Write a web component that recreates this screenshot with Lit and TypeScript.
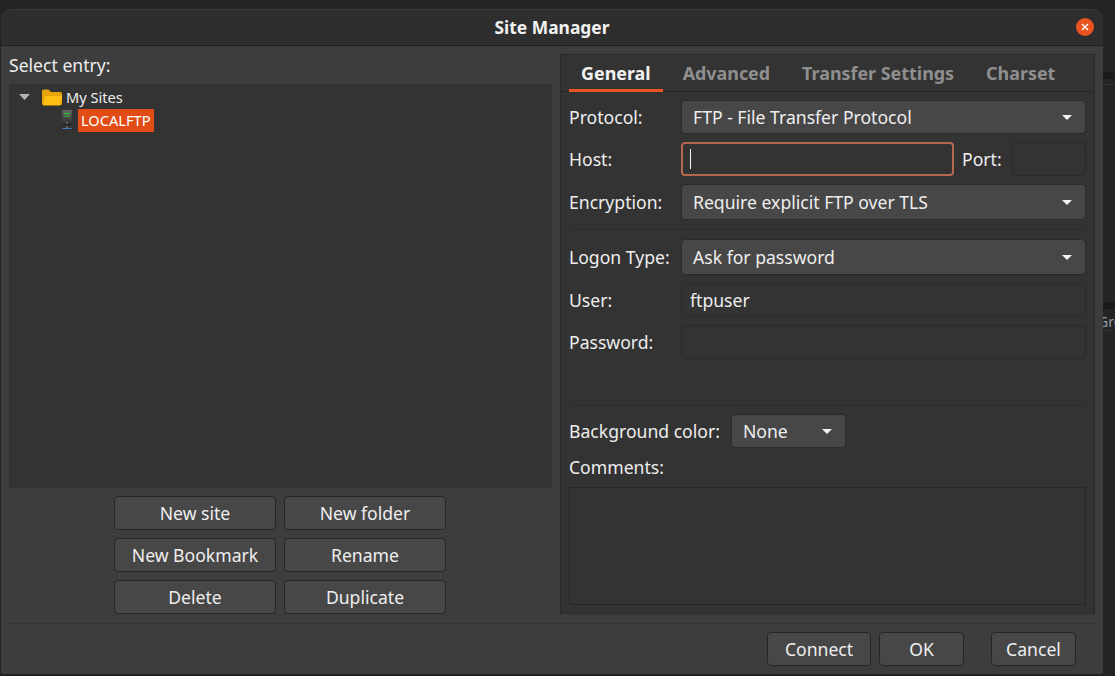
/**
 * FileZilla style Site Manager dialog
 */

import { LitElement, css, html } from "lit";
import { customElement } from "lit/decorators.js";

const caret = html`<svg class="caret" width="10" height="5" viewBox="0 0 10 5"><path d="M0 0h10L5 5z" fill="#f2f2f2" /></svg>`;

@customElement("app-root")
export class AppRoot extends LitElement {
  static styles = css`
    :host {
      display: flex;
      width: 1115px;
      height: 676px;
      overflow: hidden;
      background: #232323;
      font-family: "Noto Sans", "Open Sans", sans-serif;
      font-size: 17.6px;
      line-height: 24px;
      color: #eeeeee;
      box-sizing: border-box;
      padding: 9px 0 2px 1px;
    }

    * {
      box-sizing: border-box;
    }

    .window {
      width: 1102px;
      display: flex;
      flex-direction: column;
      background: #3d3d3d;
      border-radius: 9px 9px 0 0;
      overflow: hidden;
    }

    .titlebar {
      height: 37px;
      flex: none;
      display: flex;
      align-items: center;
      justify-content: center;
      position: relative;
      padding-bottom: 2px;
      background: #2e2e2e;
      border-top: 1px solid #3a3a3a;
      border-bottom: 1px solid #222222;
      font-weight: 700;
      font-size: 17.4px;
      color: #f2f2f2;
    }

    .close {
      position: absolute;
      right: 9px;
      top: 8px;
      width: 18px;
      height: 18px;
      border-radius: 50%;
      background: #e95420;
      display: flex;
      align-items: center;
      justify-content: center;
    }

    .content {
      flex: 1;
      display: flex;
      padding: 8px 8px 0 8px;
      gap: 8px;
    }

    .left {
      width: 543px;
      display: flex;
      flex-direction: column;
    }

    .select-label {
      height: 30px;
      line-height: 23px;
    }

    .tree {
      height: 404px;
      background: #333333;
      font-size: 14.6px;
      padding-top: 2px;
    }

    .tree-row {
      display: flex;
      align-items: center;
      height: 22px;
      white-space: nowrap;
    }

    .tree-root {
      padding-left: 10px;
    }

    .tree-root svg.fold {
      margin-right: 12px;
    }

    .tree-root .name {
      margin-left: 4px;
    }

    .tree-child {
      padding-left: 53px;
      height: 24px;
    }

    .selected {
      margin-left: 6px;
      background: #e24c16;
      color: #ffffff;
      padding: 0 4px 0 3px;
      height: 23px;
      line-height: 23px;
    }

    .site-buttons {
      display: grid;
      grid-template-columns: 162px 162px;
      grid-auto-rows: 34px;
      gap: 8px;
      padding: 8px 0 0 105px;
    }

    .btn {
      display: flex;
      align-items: center;
      justify-content: center;
      background: #474747;
      border: 1px solid #262626;
      border-radius: 4px;
      color: #eeeeee;
    }

    .notebook {
      width: 535px;
      height: 560px;
      border: 1px solid #2a2a2a;
      background: #333333;
      display: flex;
      flex-direction: column;
    }

    .tabs {
      height: 37px;
      flex: none;
      display: flex;
      gap: 8px;
      padding-left: 8px;
      border-bottom: 1px solid #262626;
      font-weight: 700;
      font-size: 17.9px;
      color: #8f8f8f;
    }

    .tab {
      padding: 0 12px;
      height: 37px;
      line-height: 36px;
      white-space: nowrap;
    }

    .tab.active {
      color: #f2f2f2;
      border-bottom: 3px solid #e95420;
      line-height: 36px;
    }

    .form {
      flex: 1;
      display: flex;
      flex-direction: column;
      padding: 8px 8px 8px 8px;
    }

    .row {
      display: grid;
      grid-template-columns: 112px 1fr;
      align-items: center;
      margin-bottom: 8px;
    }

    .row.last-group {
      margin-bottom: 9px;
    }

    .combo {
      height: 34px;
      display: flex;
      align-items: center;
      justify-content: space-between;
      padding: 0 13px 0 11px;
      background: #474747;
      border: 1px solid #2a2a2a;
      border-radius: 4px;
    }

    .entry {
      height: 34px;
      display: flex;
      align-items: center;
      padding: 0 8px;
      background: #333333;
      border: 1px solid #2a2a2a;
      border-radius: 4px;
    }

    .host-line {
      display: flex;
      align-items: center;
    }

    .entry.focus {
      width: 273px;
      flex: none;
      border: 2px solid #b5674f;
      padding: 0 7px;
    }

    .cursor {
      width: 1px;
      height: 20px;
      background: #f5f5f5;
    }

    .port-label {
      flex: none;
      width: 50px;
      margin-left: 8px;
      white-space: nowrap;
    }

    .port {
      flex: 1;
    }

    .tall {
      height: 36px;
    }

    .sep {
      height: 1px;
      background: #2d2d2d;
      flex: none;
    }

    .logon {
      margin-top: 9px;
    }

    .spacer {
      height: 38px;
    }

    .bg-row {
      display: flex;
      align-items: center;
      gap: 11px;
      margin-top: 8px;
      white-space: nowrap;
    }

    .bg-combo {
      width: 115px;
    }

    .comments-label {
      margin-top: 7px;
      height: 32px;
      line-height: 24px;
    }

    .comments {
      flex: 1;
      border: 1px solid #262626;
      background: #333333;
    }

    .divider {
      height: 1px;
      flex: none;
      margin: 9px 8px 0 8px;
      background: #343434;
    }

    .actions {
      display: flex;
      justify-content: flex-end;
      padding: 8px 27px 0 0;
      gap: 8px;
      height: 50px;
    }

    .actions .btn {
      height: 34px;
    }

    .connect {
      width: 104px;
    }

    .ok {
      width: 85px;
      margin-right: 19px;
    }

    .cancel {
      width: 85px;
    }

    .backdrop {
      flex: 1;
      display: flex;
      flex-direction: column;
      margin-top: -9px;
      height: 676px;
      background: #242424;
      font-size: 14px;
      color: #8fa0ad;
      overflow: hidden;
    }

    .backdrop .bar {
      height: 7px;
      flex: none;
      margin-top: 72px;
      background: #1a1a1a;
    }

    .backdrop .line {
      height: 1px;
      flex: none;
      margin-top: 5px;
      background: #333333;
    }

    .backdrop .dark {
      height: 7px;
      flex: none;
      margin-top: 217px;
      background: #1a1a1a;
    }

    .backdrop .text {
      height: 22px;
      flex: none;
      line-height: 26px;
      white-space: nowrap;
      border-bottom: 1px solid #333333;
      margin-left: -5px;
    }
  `;

  render() {
    return html`
      <div class="window">
        <div class="titlebar">
          Site Manager
          <span class="close">
            <svg width="8" height="8" viewBox="0 0 8 8"><path d="M1 1l6 6M7 1l-6 6" stroke="#fff" stroke-width="1.4" /></svg>
          </span>
        </div>
        <div class="content">
          <div class="left">
            <div class="select-label">Select entry:</div>
            <div class="tree">
              <div class="tree-row tree-root">
                <svg class="fold" width="11" height="6" viewBox="0 0 11 6"><path d="M0 0h11L5.5 6z" fill="#b4b4b4" /></svg>
                <svg width="20" height="17" viewBox="0 0 20 17">
                  <path d="M0 2a1.500 1.500 0 0 1 1.500-1.500h5L9 3h9.500A1.500 1.500 0 0 1 20 4.500V15a1 1 0 0 1-1 1H1a1 1 0 0 1-1-1z" fill="#e5a50a" />
                  <path d="M1 16.500L3 7h17l-2 9.500z" fill="#ffbe12" />
                </svg>
                <span class="name">My Sites</span>
              </div>
              <div class="tree-row tree-child">
                <svg width="10" height="20" viewBox="0 0 10 20">
                  <defs>
                    <linearGradient id="srv" x1="0" y1="0" x2="0" y2="1">
                      <stop offset="0" stop-color="#626562" />
                      <stop offset="1" stop-color="#262626" />
                    </linearGradient>
                  </defs>
                  <rect x="0" y="0" width="10" height="16" rx="1" fill="url(#srv)" />
                  <path d="M2 3.500h6M2 6h6" stroke="#38c838" stroke-width="1.200" />
                  <rect x="4.500" y="12" width="1" height="1" fill="#ddd" />
                  <path d="M5 16v3" stroke="#888" />
                  <path d="M0.500 18.500h9" stroke="#3a78c8" />
                </svg>
                <span class="selected">LOCALFTP</span>
              </div>
            </div>
            <div class="site-buttons">
              <div class="btn">New site</div>
              <div class="btn">New folder</div>
              <div class="btn">New Bookmark</div>
              <div class="btn">Rename</div>
              <div class="btn">Delete</div>
              <div class="btn">Duplicate</div>
            </div>
          </div>
          <div class="notebook">
            <div class="tabs">
              <div class="tab active">General</div>
              <div class="tab">Advanced</div>
              <div class="tab">Transfer Settings</div>
              <div class="tab">Charset</div>
            </div>
            <div class="form">
              <div class="row">
                <span>Protocol:</span>
                <div class="combo">FTP - File Transfer Protocol ${caret}</div>
              </div>
              <div class="row">
                <span>Host:</span>
                <div class="host-line">
                  <div class="entry focus"><span class="cursor"></span></div>
                  <span class="port-label">Port:</span>
                  <div class="entry port"></div>
                </div>
              </div>
              <div class="row last-group">
                <span>Encryption:</span>
                <div class="combo tall">Require explicit FTP over TLS ${caret}</div>
              </div>
              <div class="sep"></div>
              <div class="row logon">
                <span>Logon Type:</span>
                <div class="combo tall">Ask for password ${caret}</div>
              </div>
              <div class="row">
                <span>User:</span>
                <div class="entry">ftpuser</div>
              </div>
              <div class="row">
                <span>Password:</span>
                <div class="entry"></div>
              </div>
              <div class="spacer"></div>
              <div class="sep"></div>
              <div class="bg-row">
                <span>Background color:</span>
                <div class="combo bg-combo">None ${caret}</div>
              </div>
              <div class="comments-label">Comments:</div>
              <div class="comments"></div>
            </div>
          </div>
        </div>
        <div class="divider"></div>
        <div class="actions">
          <div class="btn connect">Connect</div>
          <div class="btn ok">OK</div>
          <div class="btn cancel">Cancel</div>
        </div>
      </div>
      <div class="backdrop">
        <div class="bar"></div>
        <div class="line"></div>
        <div class="dark"></div>
        <div class="text">Group</div>
      </div>
    `;
  }
}

declare global {
  interface HTMLElementTagNameMap {
    "app-root": AppRoot;
  }
}
